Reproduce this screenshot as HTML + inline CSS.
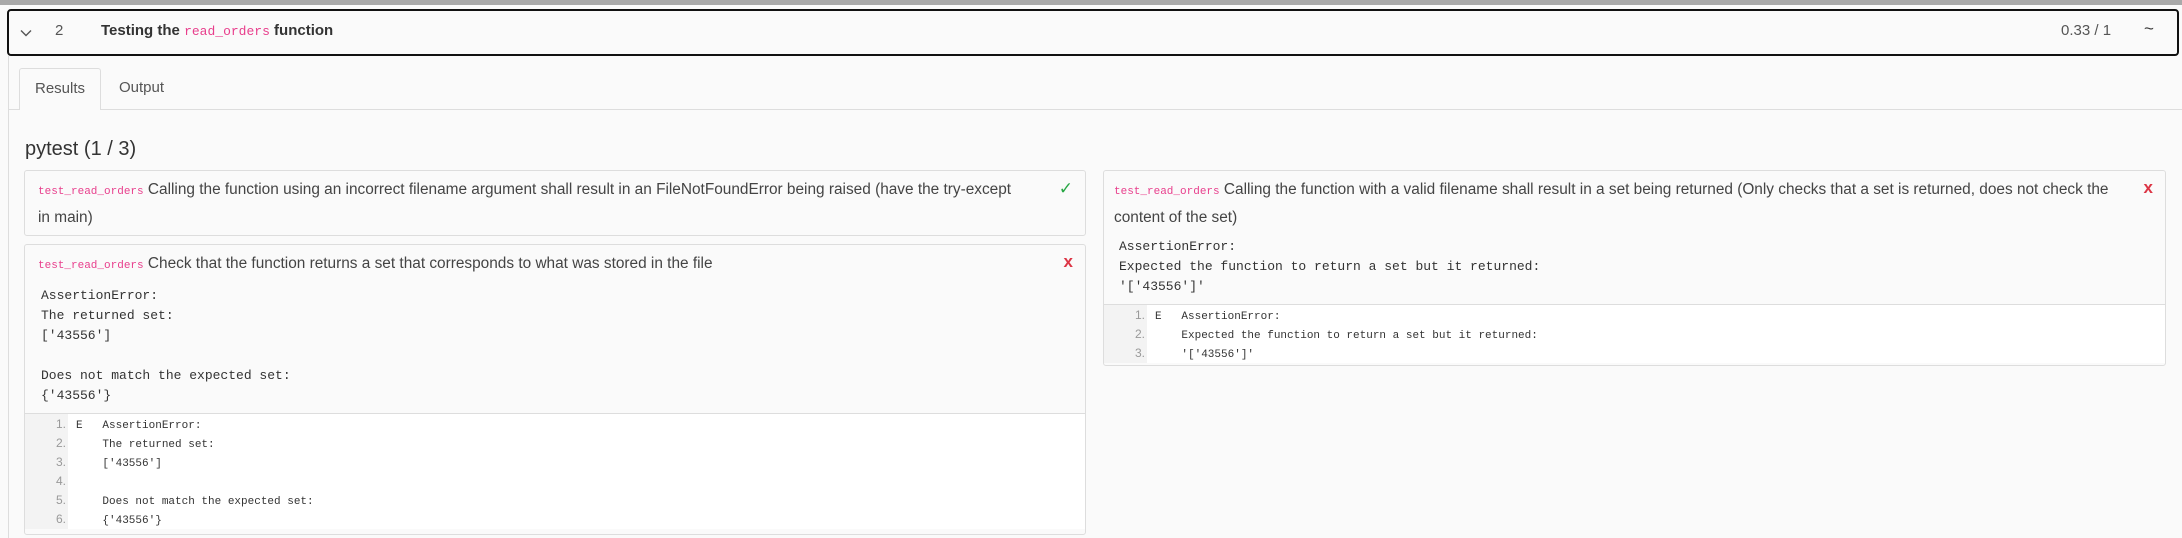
<!DOCTYPE html>
<html><head><meta charset="utf-8"><style>
*{box-sizing:border-box;margin:0;padding:0}
body{width:2182px;height:538px;overflow:hidden;background:#fafafa;font-family:"Liberation Sans",sans-serif;color:#444;position:relative}
.abs{position:absolute}
.mono{font-family:"Liberation Mono",monospace}
.card{position:absolute;border:1px solid #ddd;border-radius:3px;background:#fafafa;overflow:hidden}
.t{font-size:15.4px;line-height:25px;padding:6px 40px 0 13px;color:#444}
.t code{font-family:"Liberation Mono",monospace;font-size:11px;color:#e83e8c}
.icon{position:absolute;right:12px;top:8px;font-size:17px}
pre{font-family:"Liberation Mono",monospace;font-size:13px;line-height:20px;color:#333;padding:7px 15px 7px 16px}
.lst{border-top:1px solid #ddd;background:#fff;font-family:"Liberation Mono",monospace;font-size:11px;line-height:19px;color:#333;position:relative;padding-top:1px}
.lst .g{position:absolute;left:0;top:0;bottom:0;width:43px;background:#f3f3f3}
.lst div.r{position:relative;white-space:pre;height:19px}
.lst .n{display:inline-block;width:43px;text-align:right;color:#999;padding-right:2px;font-family:"Liberation Sans",sans-serif;font-size:12px;margin-right:8px}
</style></head><body>
<div class="abs" style="left:0;top:0;width:2182px;height:5px;background:#a9a9a9"></div>
<div class="abs" style="left:7px;top:9px;width:2172px;height:47px;border:2px solid #111;border-radius:4px;background:#fafafa"></div>
<svg class="abs" style="left:20px;top:29px" width="12" height="8" viewBox="0 0 12 8"><path d="M1 1.5l5 5 5-5" fill="none" stroke="#555" stroke-width="1.4"/></svg>
<div class="abs" style="left:55px;top:22px;font-size:15px;color:#555">2</div>
<div class="abs" style="left:101px;top:22px;font-size:15px;font-weight:bold;color:#333">Testing the <span class="mono" style="font-weight:normal;color:#e83e8c;font-size:13px">read_orders</span> function</div>
<div class="abs" style="left:2061px;top:22px;font-size:15px;color:#555">0.33 / 1</div>
<div class="abs" style="left:2144px;top:19px;font-size:17px;color:#333">~</div>
<div class="abs" style="left:8px;top:56px;width:1px;height:482px;background:#ddd"></div>
<div class="abs" style="left:8px;top:109px;width:2174px;height:1px;background:#ddd"></div>
<div class="abs" style="left:19px;top:68px;width:82px;height:42px;border:1px solid #ddd;border-bottom:none;border-radius:3px 3px 0 0;background:#fafafa;font-size:15px;line-height:40px;text-align:center;color:#555">Results</div>
<div class="abs" style="left:119px;top:79px;font-size:15px;color:#555">Output</div>
<div class="abs" style="left:25px;top:138px;font-size:20px;color:#333">pytest (1 / 3)</div>

<div class="card" style="left:24px;top:170px;width:1062px;height:66px">
<div class="t" style="padding-right:70px"><code>test_read_orders</code> Calling the function using an incorrect filename argument shall result in an FileNotFoundError being raised (have the try-except in main)</div>
<span class="icon" style="color:#28a745">✓</span>
</div>

<div class="card" style="left:24px;top:244px;width:1062px;height:291px">
<div class="t"><code>test_read_orders</code> Check that the function returns a set that corresponds to what was stored in the file</div>
<span class="icon" style="color:#dc3545;font-weight:bold;top:7px">x</span>
<pre>AssertionError:
The returned set:
['43556']

Does not match the expected set:
{'43556'}</pre>
<div class="lst"><div class="g"></div>
<div class="r"><span class="n">1.</span>E   AssertionError:</div>
<div class="r"><span class="n">2.</span>    The returned set:</div>
<div class="r"><span class="n">3.</span>    ['43556']</div>
<div class="r"><span class="n">4.</span></div>
<div class="r"><span class="n">5.</span>    Does not match the expected set:</div>
<div class="r"><span class="n">6.</span>    {'43556'}</div>
</div>
</div>

<div class="card" style="left:1103px;top:170px;width:1063px;height:196px">
<div class="t" style="padding-left:10px"><code>test_read_orders</code> Calling the function with a valid filename shall result in a set being returned (Only checks that a set is returned, does not check the content of the set)</div>
<span class="icon" style="color:#dc3545;font-weight:bold;top:7px">x</span>
<pre style="padding-left:15px">AssertionError:
Expected the function to return a set but it returned:
'['43556']'</pre>
<div class="lst"><div class="g"></div>
<div class="r"><span class="n">1.</span>E   AssertionError:</div>
<div class="r"><span class="n">2.</span>    Expected the function to return a set but it returned:</div>
<div class="r"><span class="n">3.</span>    '['43556']'</div>
</div>
</div>
</body></html>
